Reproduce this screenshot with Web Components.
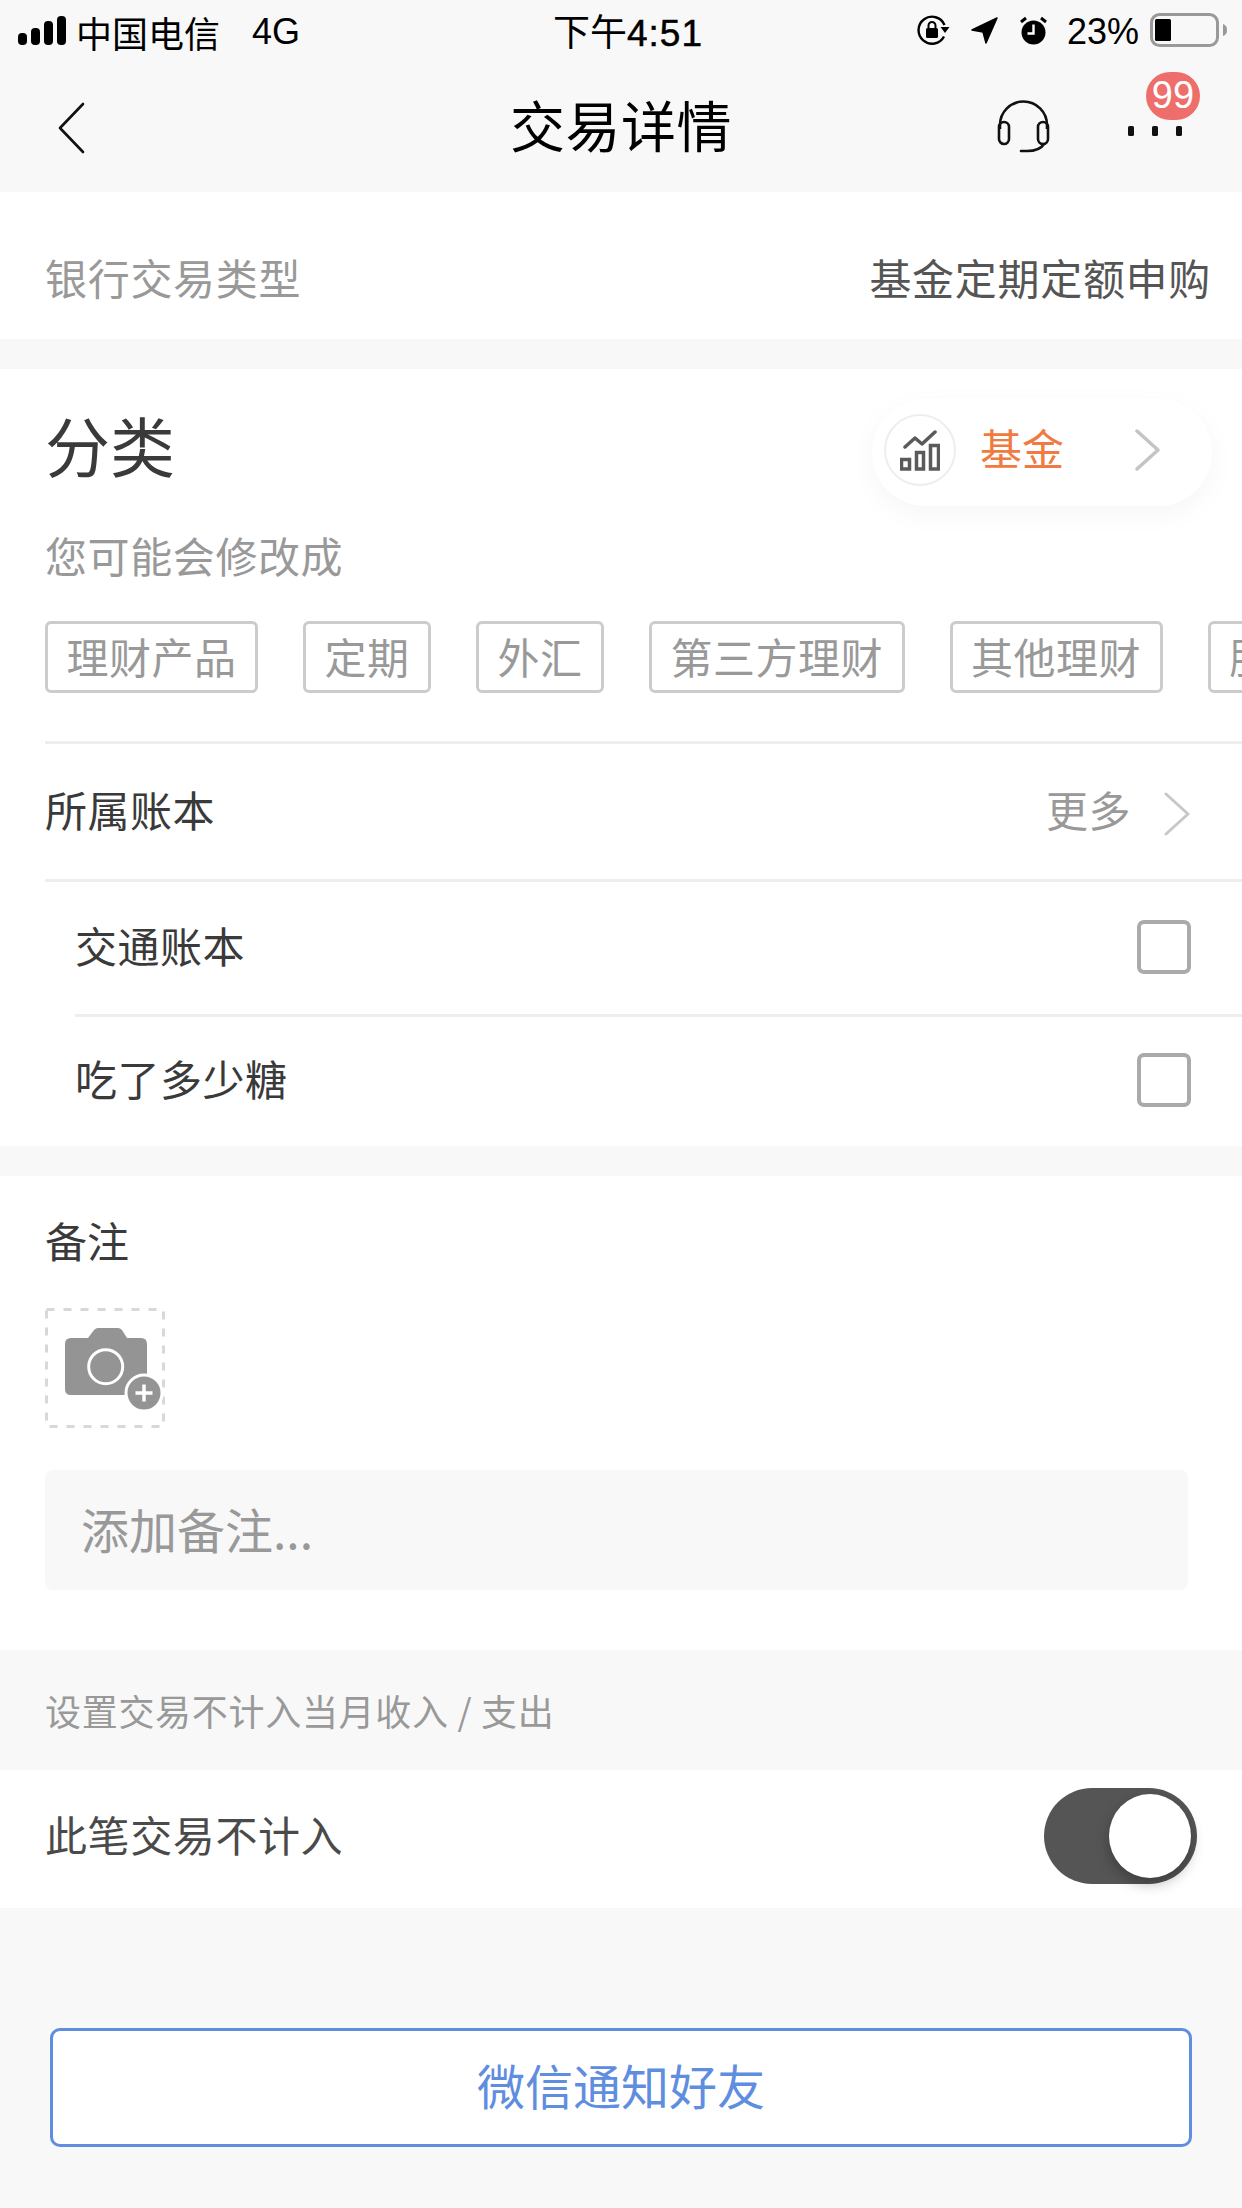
<!DOCTYPE html>
<html lang="zh">
<head>
<meta charset="utf-8">
<title>交易详情</title>
<style>
  html, body { margin: 0; padding: 0; background: #f8f8f8; }
  body { width: 1242px; height: 2208px; overflow: hidden; font-family: "Noto Sans CJK SC", "Liberation Sans", sans-serif; color: #3a3a3a; }
</style>
</head>
<body>
<app-header></app-header>
<info-row></info-row>
<gap-line></gap-line>
<category-card></category-card>
<gap-line></gap-line>
<note-card></note-card>
<exclude-block></exclude-block>
<share-button>微信通知好友</share-button>

<script>
  class AppHeader extends HTMLElement {
    connectedCallback() {
      this.attachShadow({ mode: 'open' });
      this.shadowRoot.innerHTML = `
        <style>
          :host { display: block; height: 192px; background: #f8f8f8; color: #000; position: relative; }
          .status { height: 60px; display: flex; align-items: center; padding: 0 15px 0 18px; font-size: 36px; line-height: 44px; }
          .left { width: 535px; display: flex; align-items: center; flex: none; }
          .right { display: flex; align-items: center; margin-left: auto; }
          .signal { margin-right: 10px; flex: none; }
          .left span, .time, .pct { padding-top: 4px; }
          .net { margin-left: 32px; font-family: "Liberation Sans", sans-serif; }
          .time { font-size: 37px; white-space: nowrap; }
          .time b { font-family: "Liberation Sans", sans-serif; font-weight: 400; -webkit-text-stroke: .5px #000; letter-spacing: 1px; }
          .pct { font-family: "Liberation Sans", sans-serif; font-size: 36px; margin: 0 11px 0 19px; }
          .nav { height: 132px; display: grid; grid-template-columns: 1fr auto 1fr; align-items: center; }
          .title { font-size: 55px; letter-spacing: .5px; line-height: 64px; padding-bottom: 6px; }
          .back { margin-left: 57px; display: block; margin-top: 3px; }
          .tools { display: flex; justify-content: flex-end; padding-right: 60px; }
          .headset { display: block; margin-right: 75px; }
          .dots { display: block; margin-top: 27px; }
          .badge { position: absolute; left: 1146px; top: 72px; width: 54px; height: 48px; border-radius: 25px; background: #ee6e6c; color: #fff; font: 38px/46px "Liberation Sans", sans-serif; text-align: center; }
        </style>
        <div class="status">
          <div class="left">
            <svg class="signal" width="48" height="29" viewBox="0 0 48 29" fill="#000">
              <rect x="0" y="17" width="9" height="12" rx="4"/>
              <rect x="13" y="12" width="9" height="17" rx="4"/>
              <rect x="26" y="5" width="9" height="24" rx="4"/>
              <rect x="39" y="0" width="9" height="29" rx="4"/>
            </svg>
            <span>中国电信</span><span class="net">4G</span>
          </div>
          <div class="time">下午<b>4:51</b></div>
          <div class="right">
            <svg width="33" height="30" viewBox="0 0 33 30" style="margin-right:21px">
              <path d="M27 21.500A13.500 13.500 0 1 1 27.500 10" fill="none" stroke="#000" stroke-width="2.400"/>
              <path d="M23.500 12h9l-4.500 6z" fill="#000"/>
              <rect x="9" y="13" width="12" height="10" rx="1.500" fill="#000"/>
              <path d="M11.500 13v-2.500a3.500 3.500 0 0 1 7 0V13" fill="none" stroke="#000" stroke-width="2"/>
            </svg>
            <svg width="27" height="27" viewBox="0 0 27 27" style="margin-right:21px">
              <path d="M26 1L15 26l-3-11L1 13z" fill="#000" stroke="#000" stroke-linejoin="round" stroke-width="1.500"/>
            </svg>
            <svg width="29" height="29" viewBox="0 0 29 29">
              <circle cx="14.500" cy="16.500" r="12" fill="#000"/>
              <path d="M2 6l5-4M27 6l-5-4" stroke="#000" stroke-width="3"/>
              <path d="M14.500 8.500v9H8.500" fill="none" stroke="#fff" stroke-width="2.400"/>
            </svg>
            <span class="pct">23%</span>
            <svg width="77" height="34" viewBox="0 0 77 34">
              <rect x="1.500" y="1.500" width="66" height="31" rx="8" fill="none" stroke="#999" stroke-width="3"/>
              <rect x="5" y="6" width="16" height="22" rx="1.500" fill="#000"/>
              <path d="M73 11c3 1 4 3 4 6s-1 5-4 6z" fill="#999"/>
            </svg>
          </div>
        </div>
        <div class="nav">
          <svg class="back" width="30" height="52" viewBox="0 0 30 52">
            <path d="M26 2L3 26l23 24" fill="none" stroke="#111" stroke-width="2.600" stroke-linecap="round" stroke-linejoin="round"/>
          </svg>
          <div class="title">交易详情</div>
          <div class="tools">
            <svg class="headset" width="53" height="54" viewBox="0 0 53 54">
              <path d="M3 30V26a23.500 23.500 0 0 1 47 0v4" fill="none" stroke="#111" stroke-width="2.600"/>
              <rect x="2" y="23" width="10" height="22" rx="5" fill="none" stroke="#111" stroke-width="2.600"/>
              <rect x="41" y="23" width="10" height="22" rx="5" fill="none" stroke="#111" stroke-width="2.600"/>
              <path d="M47 45c-3 5-9 7-17 7h-6" fill="none" stroke="#111" stroke-width="2.600" stroke-linecap="round"/>
            </svg>
            <svg class="dots" width="57" height="10" viewBox="0 0 57 10" fill="#111">
              <rect x="3" y="0" width="6" height="10" rx="1.500"/>
              <rect x="27" y="0" width="6" height="10" rx="1.500"/>
              <rect x="51" y="0" width="6" height="10" rx="1.500"/>
            </svg>
          </div>
        </div>
        <div class="badge">99</div>
      `;
    }
  }

  class InfoRow extends HTMLElement {
    connectedCallback() {
      this.attachShadow({ mode: 'open' });
      this.shadowRoot.innerHTML = `
        <style>
          :host { display: flex; box-sizing: border-box; height: 147px; background: #fff; align-items: center; justify-content: space-between; padding: 22px 31px 0 45px; font-size: 42px; letter-spacing: .7px; }
          .k { color: #999; }
          .v { color: #555; }
        </style>
        <span class="k">银行交易类型</span><span class="v">基金定期定额申购</span>
      `;
    }
  }

  class GapLine extends HTMLElement {
    connectedCallback() {
      this.attachShadow({ mode: 'open' });
      this.shadowRoot.innerHTML = `<style>:host { display: block; height: 30px; background: #f8f8f8; }</style>`;
    }
  }

  class TagChip extends HTMLElement {
    connectedCallback() {
      this.attachShadow({ mode: 'open' });
      this.shadowRoot.innerHTML = `
        <style>
          :host { flex: none; display: block; height: 66px; line-height: 64px; padding: 0 18.500px; border: 3px solid #ccc; border-radius: 6px; color: #999; font-size: 42px; letter-spacing: .5px; background: #fff; white-space: nowrap; }
        </style>
        <slot></slot>
      `;
    }
  }

  class CheckRow extends HTMLElement {
    connectedCallback() {
      this.attachShadow({ mode: 'open' });
      this.shadowRoot.innerHTML = `
        <style>
          :host { display: flex; align-items: center; justify-content: space-between; height: 129px; margin-left: 75px; padding-right: 51px; font-size: 42px; letter-spacing: .5px; color: #3a3a3a; }
          :host([divided]) { height: 132px; border-bottom: 3px solid #eee; }
          span { padding-bottom: 8px; }
          i { display: block; width: 54px; height: 54px; box-sizing: border-box; border: 4.500px solid #aaa; border-radius: 7px; margin-bottom: 3px; }
        </style>
        <span><slot></slot></span><i></i>
      `;
    }
  }

  class CategoryCard extends HTMLElement {
    connectedCallback() {
      this.attachShadow({ mode: 'open' });
      this.shadowRoot.innerHTML = `
        <style>
          :host { display: block; background: #fff; height: 777px; overflow: hidden; }
          .top { height: 142px; display: flex; justify-content: space-between; align-items: flex-start; padding: 0 30px 0 45px; }
          h2 { margin: 0; font-weight: 400; font-size: 65px; line-height: 80px; padding-top: 35px; color: #3a3a3a; }
          .pill { margin-top: 30px; width: 340px; height: 107px; box-sizing: border-box; border-radius: 54px; background: #fff; box-shadow: 0 8px 28px rgba(0,0,0,.04); display: flex; align-items: center; padding: 0 0 5px 12px; }
          .ring { width: 72px; height: 72px; box-sizing: border-box; border: 2px solid #eee; border-radius: 50%; display: flex; align-items: center; justify-content: center; flex: none; }
          .name { color: #f17a41; font-size: 42px; margin-left: 24px; width: 154px; padding-bottom: 8px; }
          .hint { font-size: 42px; letter-spacing: .6px; color: #999; padding-left: 45px; line-height: 60px; margin-top: 14px; }
          .tags { display: flex; gap: 45px; padding-left: 45px; margin-top: 36px; overflow: hidden; }
          .sep { height: 3px; background: #eee; margin-left: 45px; }
          .book { display: flex; align-items: center; justify-content: space-between; height: 135px; padding: 0 51px 0 45px; font-size: 42px; letter-spacing: .5px; color: #3a3a3a; }
          .book > span:first-child { padding-bottom: 6px; }
          .more { color: #999; display: flex; align-items: center; gap: 32px; padding-bottom: 0; }
          .more b { font-weight: 400; padding-bottom: 6px; }
          .more svg { margin-top: 4px; }
        </style>
        <div class="top">
          <h2>分类</h2>
          <div class="pill">
            <div class="ring">
              <svg width="40" height="41" viewBox="0 0 40 41" fill="none" stroke="#5a5a5a" stroke-width="3.500">
                <path d="M5 17l10-9 7 6L35 2" stroke-linecap="round" stroke-linejoin="round"/>
                <rect x="1.500" y="29.500" width="8" height="9.500"/>
                <rect x="16.500" y="22.500" width="7" height="16.500"/>
                <rect x="30.500" y="15.500" width="8" height="23.500"/>
              </svg>
            </div>
            <div class="name">基金</div>
            <svg width="28" height="42" viewBox="0 0 28 42"><path d="M3 2l21 19L3 40" fill="none" stroke="#c4c4c4" stroke-width="3.500" stroke-linecap="round" stroke-linejoin="round"/></svg>
          </div>
        </div>
        <div class="hint">您可能会修改成</div>
        <div class="tags">
          <tag-chip>理财产品</tag-chip>
          <tag-chip>定期</tag-chip>
          <tag-chip>外汇</tag-chip>
          <tag-chip>第三方理财</tag-chip>
          <tag-chip>其他理财</tag-chip>
          <tag-chip>股票</tag-chip>
        </div>
        <div class="sep" style="margin-top:48px"></div>
        <div class="book">
          <span>所属账本</span>
          <span class="more"><b>更多</b>
            <svg width="28" height="44" viewBox="0 0 28 44"><path d="M3 2l22 20L3 42" fill="none" stroke="#c8c8c8" stroke-width="3" stroke-linecap="round" stroke-linejoin="round"/></svg>
          </span>
        </div>
        <div class="sep"></div>
        <check-row divided>交通账本</check-row>
        <check-row>吃了多少糖</check-row>
      `;
    }
  }

  class NoteCard extends HTMLElement {
    connectedCallback() {
      this.attachShadow({ mode: 'open' });
      this.shadowRoot.innerHTML = `
        <style>
          :host { display: block; height: 474px; background: #fff; padding: 0 45px; box-sizing: border-box; overflow: hidden; }
          .label { font-size: 42px; line-height: 56px; padding-top: 36px; color: #3a3a3a; }
          svg { display: block; margin-top: 40px; }
          .input { margin-top: 42px; width: 1143px; height: 120px; background: #f8f8f8; border-radius: 8px; color: #999; font-size: 48px; line-height: 116px; padding-left: 36px; box-sizing: border-box; }
        </style>
        <div class="label">备注</div>
        <svg width="120" height="120" viewBox="0 0 120 120">
          <rect x="1.500" y="1.500" width="117" height="117" fill="none" stroke="#d8d8d8" stroke-width="3" stroke-dasharray="8 9"/>
          <path d="M26 30h17l6-8q2-2 4-2h20q2 0 4 2l5 8h14q6 0 6 6v45q0 6-6 6H26q-6 0-6-6V36q0-6 6-6z" fill="#949494"/>
          <circle cx="60.700" cy="58.700" r="17" fill="none" stroke="#fff" stroke-width="3"/>
          <circle cx="99" cy="85" r="18" fill="#949494" stroke="#fff" stroke-width="3"/>
          <path d="M99 76.500v17M90.500 85h17" stroke="#fff" stroke-width="3.500"/>
        </svg>
        <div class="input">添加备注...</div>
      `;
    }
  }

  class ExcludeBlock extends HTMLElement {
    connectedCallback() {
      this.attachShadow({ mode: 'open' });
      this.shadowRoot.innerHTML = `
        <style>
          :host { display: block; }
          .cap { height: 120px; box-sizing: border-box; padding: 35px 45px 0; font-size: 36px; line-height: 50px; color: #999; background: #f8f8f8; letter-spacing: .7px; }
          .row { height: 138px; background: #fff; display: flex; align-items: center; justify-content: space-between; padding: 0 45px; font-size: 42px; letter-spacing: .6px; color: #4a4a4a; }
          .row span { padding-bottom: 12px; }
          .sw { width: 153px; height: 96px; border-radius: 48px; background: #555; position: relative; flex: none; margin-bottom: 6px; }
          .sw::after { content: ''; position: absolute; right: 6px; top: 6px; width: 82px; height: 84px; border-radius: 50%; background: #fff; box-shadow: 0 6px 14px rgba(0,0,0,.28); }
        </style>
        <div class="cap">设置交易不计入当月收入 / 支出</div>
        <div class="row"><span>此笔交易不计入</span><div class="sw"></div></div>
      `;
    }
  }

  class ShareButton extends HTMLElement {
    connectedCallback() {
      this.attachShadow({ mode: 'open' });
      this.shadowRoot.innerHTML = `
        <style>
          :host { display: block; box-sizing: border-box; margin: 120px 50px 0; width: 1142px; height: 119px; border: 3px solid #5f8de0; border-radius: 10px; color: #5f8de0; background: #fff; font-size: 48px; line-height: 107px; text-align: center; }
        </style>
        <slot></slot>
      `;
    }
  }

  customElements.define('app-header', AppHeader);
  customElements.define('info-row', InfoRow);
  customElements.define('gap-line', GapLine);
  customElements.define('tag-chip', TagChip);
  customElements.define('check-row', CheckRow);
  customElements.define('category-card', CategoryCard);
  customElements.define('note-card', NoteCard);
  customElements.define('exclude-block', ExcludeBlock);
  customElements.define('share-button', ShareButton);
</script>
</body>
</html>
